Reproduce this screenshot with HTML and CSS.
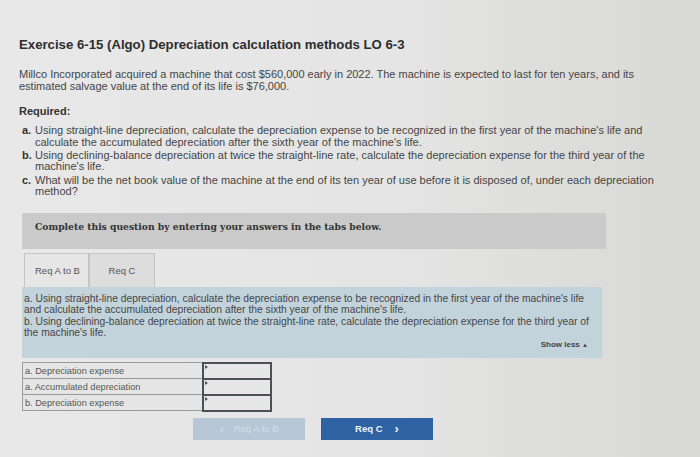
FILE: index.html
```html
<!DOCTYPE html>
<html>
<head>
<meta charset="utf-8">
<link rel="stylesheet" href="styles.css">
</head>
<body>
<div class="page">
  <h1 class="title">Exercise 6-15 (Algo) Depreciation calculation methods LO 6-3</h1>
  <p class="intro">Millco Incorporated acquired a machine that cost $560,000 early in 2022. The machine is expected to last for ten years, and its estimated salvage value at the end of its life is $76,000.</p>
  <div class="required">
    <div class="req-head">Required:</div>
    <div class="req-item"><span class="req-label">a.</span><span>Using straight-line depreciation, calculate the depreciation expense to be recognized in the first year of the machine's life and calculate the accumulated depreciation after the sixth year of the machine's life.</span></div>
    <div class="req-item"><span class="req-label">b.</span><span>Using declining-balance depreciation at twice the straight-line rate, calculate the depreciation expense for the third year of the machine's life.</span></div>
    <div class="req-item"><span class="req-label">c.</span><span>What will be the net book value of the machine at the end of its ten year of use before it is disposed of, under each depreciation method?</span></div>
  </div>

  <div class="complete">Complete this question by entering your answers in the tabs below.</div>

  <div class="tabs">
    <div class="tab active">Req A to B</div>
    <div class="tab">Req C</div>
  </div>
  <div class="panel">
    <p>a. Using straight-line depreciation, calculate the depreciation expense to be recognized in the first year of the machine's life and calculate the accumulated depreciation after the sixth year of the machine's life.<br>b. Using declining-balance depreciation at twice the straight-line rate, calculate the depreciation expense for the third year of the machine's life.</p>
    <div class="show-less">Show less <span class="tri">&#9650;</span></div>
  </div>

  <table class="answers">
    <tr><td class="lbl">a. Depreciation expense</td><td class="inp"><span class="mark"></span></td></tr>
    <tr><td class="lbl">a. Accumulated depreciation</td><td class="inp"><span class="mark"></span></td></tr>
    <tr><td class="lbl">b. Depreciation expense</td><td class="inp"><span class="mark"></span></td></tr>
  </table>

  <div class="nav">
    <div class="btn prev"><span class="chev">&lsaquo;</span>Req A to B</div>
    <div class="btn next">Req C<span class="chev right">&rsaquo;</span></div>
  </div>
</div>
</body>
</html>
```
FILE: styles.css
```css
html, body {
  margin: 0;
  padding: 0;
}
body {
  width: 700px;
  height: 457px;
  overflow: hidden;
  background: linear-gradient(90deg, #e7e8e7 0%, #e4e5e4 55%, #d8d8d6 100%);
  font-family: "Liberation Sans", Arial, sans-serif;
  color: #3a3a3a;
}
.page {
  padding: 37px 0 0 19px;
}
.title {
  margin: 0;
  font-size: 13.2px;
  line-height: 16px;
  font-weight: bold;
  color: #2e2e2e;
}
.intro {
  margin: 16px 0 0 0;
  width: 615px;
  font-size: 11px;
  line-height: 11.5px;
  color: #454545;
}
.required {
  margin-top: 14px;
  font-size: 11px;
  line-height: 11.5px;
  color: #454545;
}
.req-head {
  font-weight: bold;
  margin-bottom: 7.5px;
  color: #333;
}
.req-item {
  display: flex;
  width: 632px;
  margin-bottom: 1.8px;
  padding-left: 3px;
}
.req-label {
  font-weight: bold;
  color: #333;
  width: 13px;
  flex: none;
}
.complete {
  margin: 15px 0 0 3px;
  width: 584px;
  height: 36px;
  box-sizing: border-box;
  padding: 8px 0 0 13px;
  background: #c9cac9;
  font-family: "DejaVu Serif", "Liberation Serif", serif;
  font-weight: bold;
  font-size: 9.2px;
  line-height: 12px;
  color: #333;
}
.tabs {
  display: flex;
  margin: 4px 0 0 5px;
}
.tab {
  width: 66px;
  height: 34px;
  box-sizing: border-box;
  border: 1px solid #c4c4c4;
  border-bottom: none;
  background: #dcdddc;
  font-size: 9.5px;
  color: #555;
  display: flex;
  align-items: center;
  justify-content: center;
}
.tab.active {
  width: 65px;
  background: #e5e6e5;
  justify-content: flex-start;
  padding-left: 10px;
}
.panel {
  margin-left: 3px;
  width: 580px;
  height: 71px;
  box-sizing: border-box;
  padding: 6px 6px 0 2px;
  background: #c3d3dc;
  font-size: 10.3px;
  line-height: 11.5px;
  color: #464646;
  position: relative;
}
.panel p {
  margin: 0;
}
.show-less {
  position: absolute;
  right: 14px;
  bottom: 6px;
  font-size: 8px;
  font-weight: bold;
  color: #444;
}
.tri {
  font-size: 6px;
}
.answers {
  margin: 4px 0 0 3px;
  border-collapse: collapse;
  font-size: 9.2px;
  color: #555;
}
.answers td {
  height: 14px;
  padding: 0;
}
.lbl {
  width: 177px;
  border: 1px solid #9a9a9a;
  padding-left: 2px !important;
  background: #e4e5e4;
}
.inp {
  width: 66px;
  border: 2px solid #4a4f58;
  background: #e6e7e6;
  position: relative;
  vertical-align: top;
}
.mark {
  position: absolute;
  left: 1px;
  top: 1px;
  width: 0;
  height: 0;
  border-left: 3px solid #555;
  border-top: 2px solid transparent;
  border-bottom: 2px solid transparent;
}
.nav {
  display: flex;
  gap: 16px;
  margin: 6px 0 0 174px;
}
.btn {
  width: 112px;
  height: 22px;
  display: flex;
  align-items: center;
  justify-content: center;
  font-size: 9.5px;
  font-weight: bold;
}
.chev {
  font-size: 13px;
  line-height: 10px;
  margin-right: 10px;
}
.chev.right {
  margin-right: 0;
  margin-left: 12px;
}
.prev {
  background: #b7c7d5;
  color: #d6dee7;
  font-weight: normal;
}
.next {
  background: #2e62a3;
  color: #f0f4f8;
}
```
